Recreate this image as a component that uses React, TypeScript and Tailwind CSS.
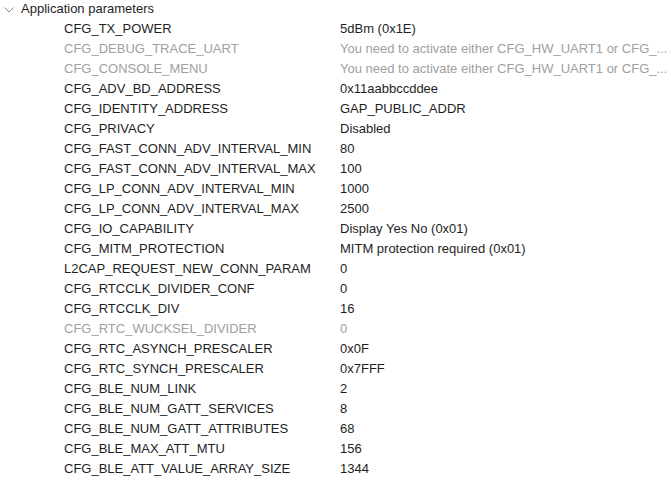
import React from 'react'

type Param = { name: string; value: string; disabled?: boolean }

const uartHint = 'You need to activate either CFG_HW_UART1 or CFG_...'

const params: Param[] = [
  { name: 'CFG_TX_POWER', value: '5dBm (0x1E)' },
  { name: 'CFG_DEBUG_TRACE_UART', value: uartHint, disabled: true },
  { name: 'CFG_CONSOLE_MENU', value: uartHint, disabled: true },
  { name: 'CFG_ADV_BD_ADDRESS', value: '0x11aabbccddee' },
  { name: 'CFG_IDENTITY_ADDRESS', value: 'GAP_PUBLIC_ADDR' },
  { name: 'CFG_PRIVACY', value: 'Disabled' },
  { name: 'CFG_FAST_CONN_ADV_INTERVAL_MIN', value: '80' },
  { name: 'CFG_FAST_CONN_ADV_INTERVAL_MAX', value: '100' },
  { name: 'CFG_LP_CONN_ADV_INTERVAL_MIN', value: '1000' },
  { name: 'CFG_LP_CONN_ADV_INTERVAL_MAX', value: '2500' },
  { name: 'CFG_IO_CAPABILITY', value: 'Display Yes No (0x01)' },
  { name: 'CFG_MITM_PROTECTION', value: 'MITM protection required (0x01)' },
  { name: 'L2CAP_REQUEST_NEW_CONN_PARAM', value: '0' },
  { name: 'CFG_RTCCLK_DIVIDER_CONF', value: '0' },
  { name: 'CFG_RTCCLK_DIV', value: '16' },
  { name: 'CFG_RTC_WUCKSEL_DIVIDER', value: '0', disabled: true },
  { name: 'CFG_RTC_ASYNCH_PRESCALER', value: '0x0F' },
  { name: 'CFG_RTC_SYNCH_PRESCALER', value: '0x7FFF' },
  { name: 'CFG_BLE_NUM_LINK', value: '2' },
  { name: 'CFG_BLE_NUM_GATT_SERVICES', value: '8' },
  { name: 'CFG_BLE_NUM_GATT_ATTRIBUTES', value: '68' },
  { name: 'CFG_BLE_MAX_ATT_MTU', value: '156' },
  { name: 'CFG_BLE_ATT_VALUE_ARRAY_SIZE', value: '1344' },
]

export default function App() {
  return (
    <div className="w-[671px] h-[482px] overflow-hidden bg-white text-[13px] text-[#1e1e1e] font-['Liberation_Sans',Arial,sans-serif]">
      <div className="flex h-5 -mt-px items-center">
        <svg width="10" height="6" viewBox="0 0 10 6" className="ml-1 mr-[7px] mt-px">
          <path d="M0.5 0.5 L5 5 L9.5 0.5" fill="none" stroke="#8a8a8a" strokeWidth="1" />
        </svg>
        <span>Application parameters</span>
      </div>
      <ul>
        {params.map((p) => (
          <li
            key={p.name}
            className={`flex h-5 items-center whitespace-nowrap ${p.disabled ? 'text-[#a0a0a0]' : ''}`}
          >
            <span className="ml-16 w-[276px] shrink-0">{p.name}</span>
            <span>{p.value}</span>
          </li>
        ))}
      </ul>
    </div>
  )
}
